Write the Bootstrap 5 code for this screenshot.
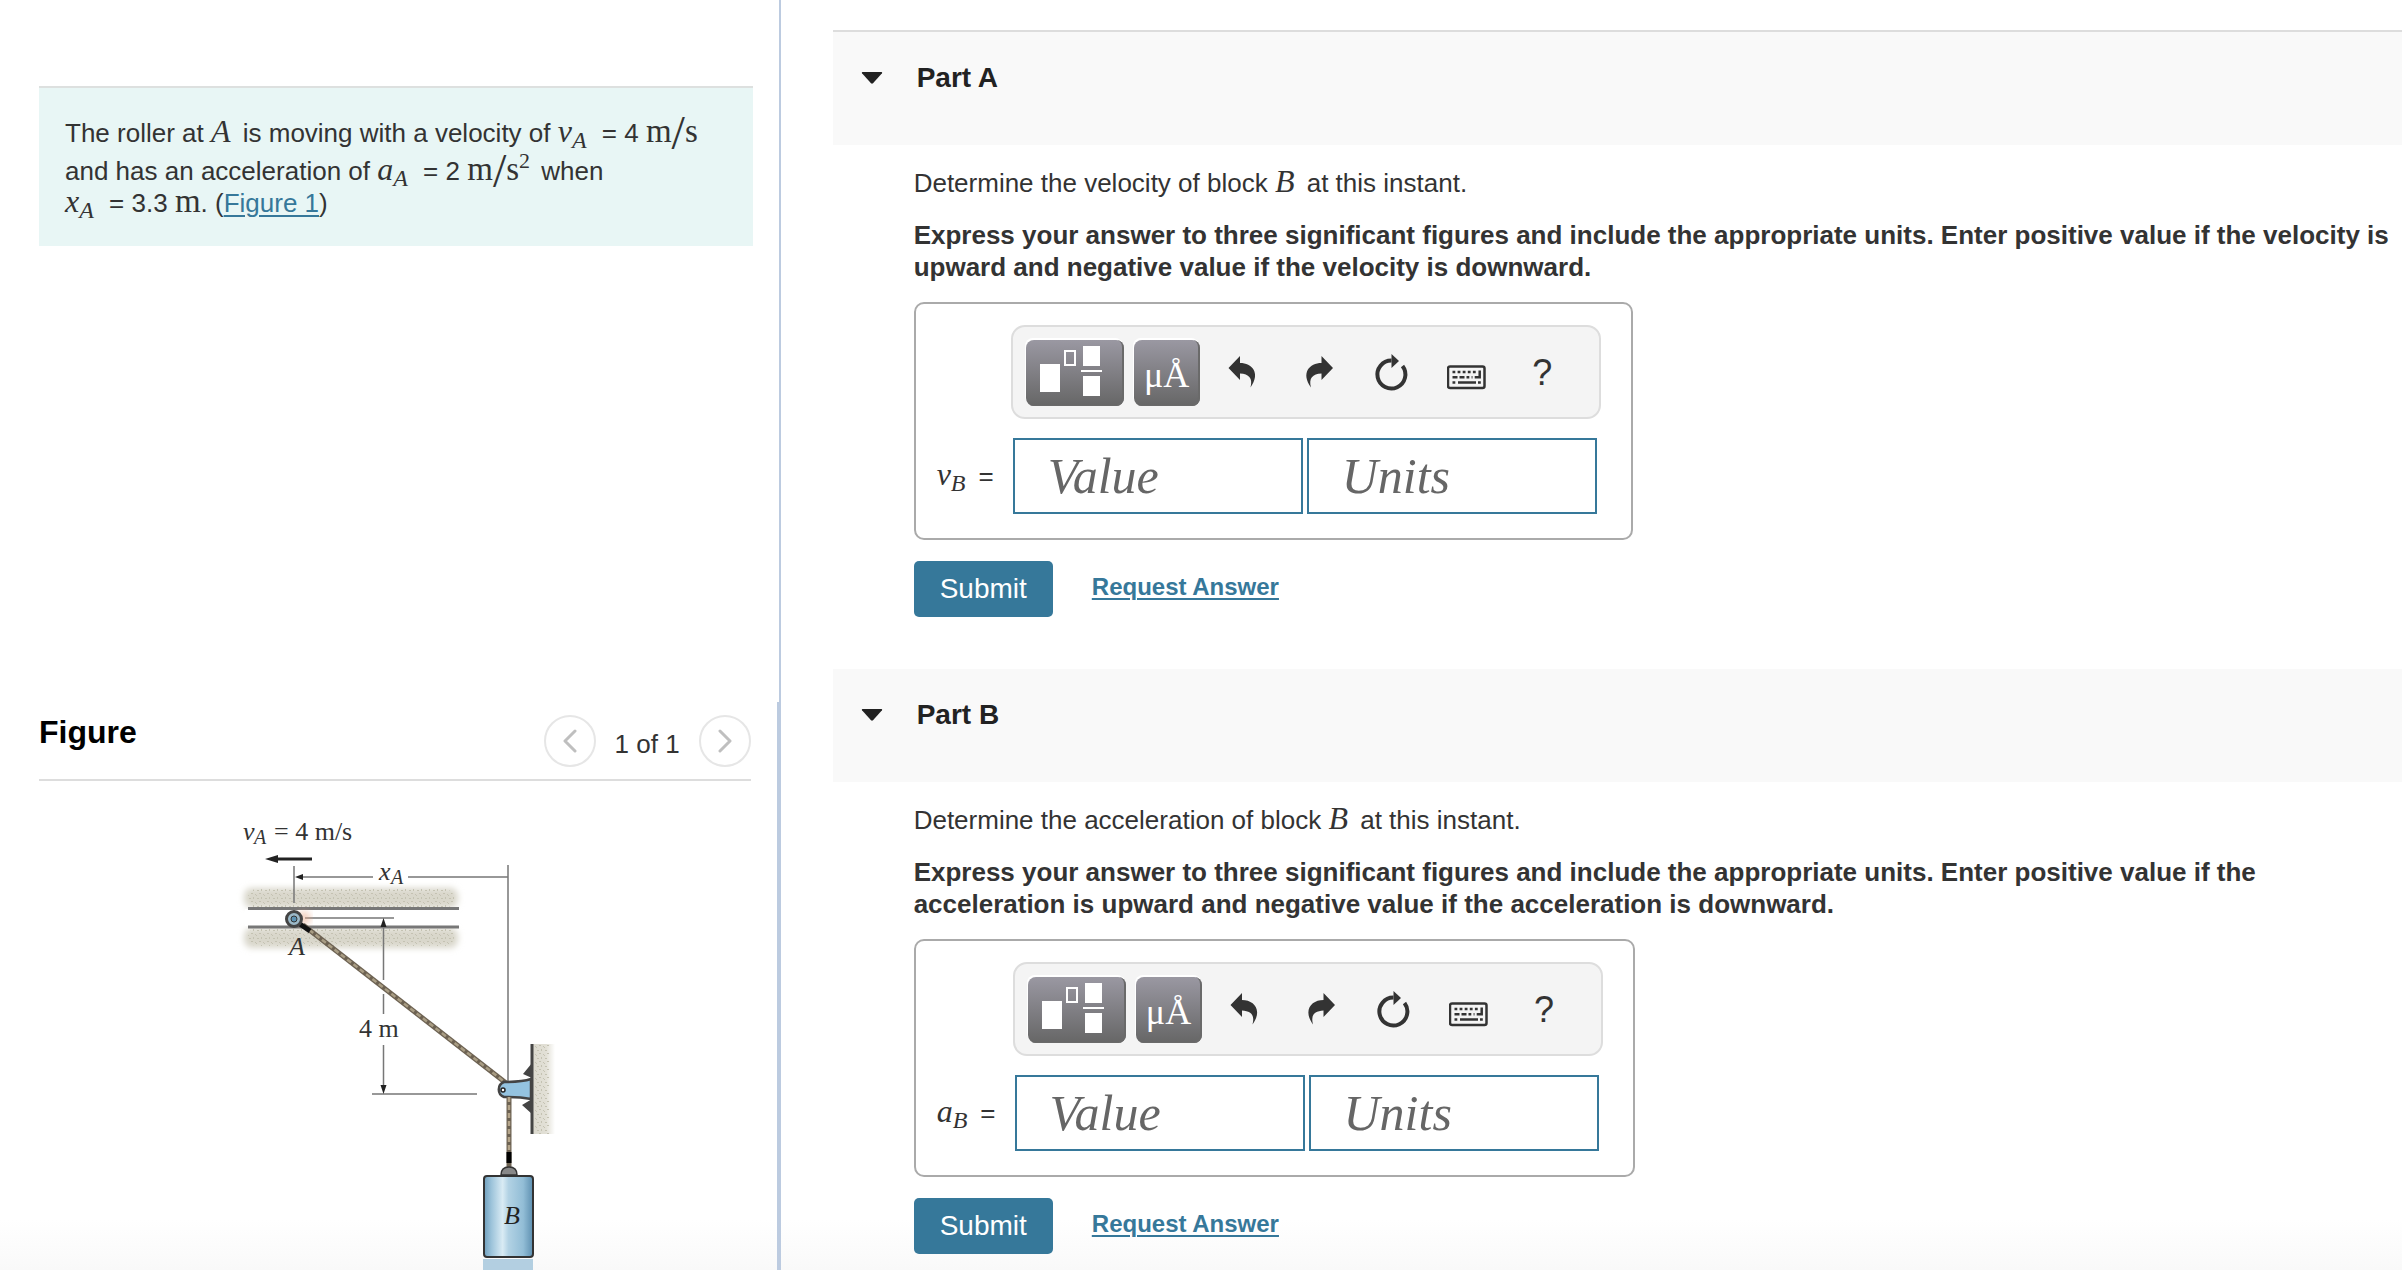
<!DOCTYPE html>
<html lang="en">
<head>
<meta charset="utf-8">
<meta name="viewport" content="width=device-width, initial-scale=1">
<title>Roller and block</title>
<link href="https://cdn.jsdelivr.net/npm/bootstrap@5.3.0/dist/css/bootstrap.min.css" rel="stylesheet">
<style>
  body { font: 26px/32px "Liberation Sans", Arial, sans-serif; color: #333; background: #fff; }
  .app-shell { height: 100vh; background: linear-gradient(to top, #f9f9f9, #fff 50px); }
  .side-col { flex: 0 0 32.5%; }
  .problem-pane { flex: 0 0 55.3%; border-right: 2px solid #bccbe0; padding: 86px 26px 0 39px; }
  .problem-text { background: #e8f6f5; border-top: 2px solid #dde0df; padding: 29px 26px 27px; }
  .figure-pane { border-right: 4px solid #bccbe0; padding: 13px 26px 0 39px; }
  .figure-head { border-bottom: 2px solid #ddd; height: 66px; }
  .figure-title { font-size: 32px; line-height: 34px; font-weight: 700; color: #000; }
  .pager-btn { width: 52px; height: 52px; border: 2px solid #e6e6e6; background: #fff; }
  .pager-count { padding: 6px 19px 0; }
  .teal-link { color: #36789a; text-decoration-thickness: 2px; text-underline-offset: 3px; }

  .mi, .mu, .msub, .msup, .mslash { font-family: "Liberation Serif", serif; }
  .mi { font-style: italic; font-size: 32px; line-height: 24px; }
  .mi-alone { margin-right: 5px; }
  .mu { font-size: 33px; line-height: 24px; }
  .msub { font-style: italic; font-size: 24px; line-height: 16px; vertical-align: -6px; margin-right: 8px; }
  .msup { font-size: 22px; line-height: 24px; vertical-align: 12px; margin-right: 4px; }
  .mslash { font-size: 48px; line-height: 16px; vertical-align: -7px; }

  .main-col { padding: 30px 0 0 52px; }
  .part-head { border-top: 2px solid transparent; background: #f9f9f9; background-clip: padding-box; padding: 30px 28px 51px; }
  .part-first .part-head { border-top-color: #ddd; }
  .part-toggle { font-size: 28px; line-height: 32px; font-weight: 700; color: #222; gap: 34px; }
  .part-body { padding: 22px 8px 50px 81px; }
  .ask { margin-bottom: 20px; }
  .directions { margin-bottom: 19px; }
  .answer-box { width: fit-content; border: 2px solid #aaa; border-radius: 10px; padding: 21px 30px 24px 21px; margin-bottom: 21px; background: #fff; grid-template-columns: auto auto; row-gap: 19px; }
  .tool-strip { grid-column: 2; border: 2px solid #ddd; border-radius: 14px; background: #f4f4f4; width: 590px; height: 94px; padding: 13px; gap: 10px; }
  .dark-tool { height: 66px; width: 66px; border-radius: 8px; background: linear-gradient(#9a98a2, #666); box-shadow: -1px -2px 0 #fff, inset -2px -1px 0 #6a6a6a; color: #fff; font: 36px/70px "Liberation Serif", serif; }
  .dark-tool.wide-tool { width: 98px; }
  .plain-tool { width: 65px; height: 66px; color: #333; background: none; font-size: 36px; line-height: 62px; }
  .answer-label { font-size: 26px; padding-right: 17px; }
  .answer-label .msub { margin-right: 13px; }
  .answer-fields { padding-left: 2px; gap: 4px; }
  .answer-input { width: 290px; height: 76px; border: 2px solid #36789a; border-radius: 0; padding: 0 33px; font: italic 50px "Liberation Serif", serif; color: #333; }
  .answer-input::placeholder { color: #666; opacity: 1; }
  .submit-btn { background: #36789a; color: #fff; font-size: 28px; line-height: 32px; border-radius: 5px; padding: 12px 26px; height: 56px; }
  .request-link { font-size: 24px; font-weight: 700; padding-top: 10px; margin-left: 39px; }
</style>
</head>
<body>
<svg class="d-none" aria-hidden="true">
  <symbol id="i-templates" viewBox="0 0 98 66">
    <g fill="#fff"><path d="M14 24h20v28H14zM57 6h17v20H57zM55 30h21v2H55zM57 36h17v20H57z"/></g>
    <rect x="39" y="11" width="10" height="14" fill="none" stroke="#fff" stroke-width="2"/>
  </symbol>
  <symbol id="i-undo" viewBox="0 0 40 66"><path d="M6.500 28 18 16v7C30 23 39 33 28.500 47.500 31 38 27 34 18 33.500V40z" fill="currentColor"/></symbol>
  <symbol id="i-redo" viewBox="0 0 40 66"><path d="M36 28 24.500 16v7C12.500 23 3.500 33 14 47.500 11.500 38 15.500 34 24.500 33.500V40z" fill="currentColor"/></symbol>
  <symbol id="i-reset" viewBox="0 0 40 66">
    <path d="M30.500 26A14 14 0 1 1 19.500 20.500" fill="none" stroke="currentColor" stroke-width="4"/>
    <path d="M19.500 14 27 21l-7.500 7z" fill="currentColor"/>
  </symbol>
  <symbol id="i-keys" viewBox="0 0 40 66">
    <rect x="1" y="26.500" width="36.500" height="21.500" rx="2" fill="none" stroke="currentColor" stroke-width="2.500"/>
    <path d="M5.500 32h24M5.500 42.500h3M31 42.500h3" stroke="currentColor" stroke-width="2.500" stroke-dasharray="2.800 2.300"/>
    <path d="M5.500 37.300h5M12.500 37.300h13" stroke="currentColor" stroke-width="2.500" stroke-dasharray="5 2 2.800 2.300 2.800 2.300 2.800"/>
    <path d="M32.700 30.500v6.800h-5M11 42.500h18" fill="none" stroke="currentColor" stroke-width="2.500"/>
  </symbol>
  <symbol id="i-caret" viewBox="0 0 22 12"><path d="M1.500 0h19q1 .3.500 1.300L12 11.300q-1 .9-2 0L1 1.300Q.5.300 1.500 0z" fill="currentColor"/></symbol>
</svg>

<div class="app-shell d-flex overflow-hidden">
  <aside class="side-col d-flex flex-column">
    <section class="problem-pane">
      <div class="problem-text">
        The roller at <span class="mi mi-alone">A</span> is moving with a velocity of <span class="mi">v</span><span class="msub">A</span> = 4 <span class="mu">m</span><span class="mslash">/</span><span class="mu">s</span><br>
        and has an acceleration of <span class="mi">a</span><span class="msub">A</span> = 2 <span class="mu">m</span><span class="mslash">/</span><span class="mu">s</span><span class="msup">2</span> when<br>
        <span class="mi">x</span><span class="msub">A</span> = 3.3 <span class="mu">m</span>. (<a class="teal-link" href="#figure">Figure 1</a>)
      </div>
    </section>
    <section class="figure-pane flex-grow-1 overflow-hidden" id="figure">
      <div class="figure-head d-flex justify-content-between align-items-start">
        <h2 class="figure-title m-0">Figure</h2>
        <div class="d-flex align-items-center">
          <button type="button" class="pager-btn rounded-circle p-0 d-flex align-items-center justify-content-center" aria-label="Previous figure">
            <svg width="16" height="24" viewBox="0 0 16 24" fill="none" stroke="#bfbfbf" stroke-width="3" stroke-linecap="round" stroke-linejoin="round"><path d="M13 2 3 12l10 10"/></svg>
          </button>
          <span class="pager-count">1 of 1</span>
          <button type="button" class="pager-btn rounded-circle p-0 d-flex align-items-center justify-content-center" aria-label="Next figure">
            <svg width="16" height="24" viewBox="0 0 16 24" fill="none" stroke="#bfbfbf" stroke-width="3" stroke-linecap="round" stroke-linejoin="round"><path d="m3 2 10 10L3 22"/></svg>
          </button>
        </div>
      </div>
      <svg class="d-block mx-auto mt-3" width="330" height="474" viewBox="230 797 330 474" font-family="Liberation Serif, serif" font-size="26" fill="#333" role="img" aria-label="Roller A in a slot, tied by a rope over a pulley to block B">
        <defs>
          <filter id="soft" x="-10%" y="-40%" width="120%" height="180%"><feGaussianBlur stdDeviation="3"/></filter>
          <linearGradient id="steel"><stop offset="0" stop-color="#6f9fbd"/><stop offset=".15" stop-color="#9cc3da"/><stop offset=".38" stop-color="#d9ebf4"/><stop offset=".5" stop-color="#b2d2e4"/><stop offset=".8" stop-color="#92bdd6"/><stop offset="1" stop-color="#5d8fb0"/></linearGradient>
          <linearGradient id="wall"><stop offset="0" stop-color="#dcdacf"/><stop offset=".6" stop-color="#e2e0d6"/><stop offset="1" stop-color="#fff"/></linearGradient>
          <pattern id="grit" width="8" height="8" patternUnits="userSpaceOnUse"><path d="M1 2h2v1H1zM5 1h1v2H5zM3 5h2v1H3zM7 6h1v1H7zM0 7h1v1H0z" fill="#c4c2b2"/></pattern>
        </defs>
        <g filter="url(#soft)"><rect x="244" y="888" width="214" height="20" rx="8" fill="#d9d7cb"/><rect x="244" y="928" width="214" height="20" rx="8" fill="#d9d7cb"/></g>
        <rect x="248" y="889" width="206" height="19" rx="9" fill="url(#grit)"/><rect x="248" y="928" width="206" height="18" rx="9" fill="url(#grit)"/>
        <rect x="245" y="909" width="215" height="17" fill="#fff"/>
        <path d="M248 908.500h211M248 927h211" stroke="#777" stroke-width="3"/>
        <path d="M278 859h34" stroke="#222" stroke-width="3"/><path d="m265 859 13-4v8z" fill="#222"/>
        <path d="M294 866v37M302 877h71M408 877h100M508 865v216M305 918h89M383.500 926v54M383.500 994v20M383.500 1045v42M372 1094h105" stroke="#777" stroke-width="1.500"/>
        <path d="m295 877 8-3v6zM383.500 918l-3 9h6zM383.500 1094l-3-9h6z" fill="#222"/>
        <circle cx="304" cy="918" r="7" fill="#e9a888" opacity=".5" filter="url(#soft)"/>
        <path d="m303 925 203 158" stroke="#6d6252" stroke-width="5"/><path d="m303 925 203 158" stroke="#a99d84" stroke-width="2.500" stroke-dasharray="5 3"/>
        <path d="m297 922 13 9" stroke="#111" stroke-width="5"/>
        <circle cx="294" cy="919" r="7.500" fill="#9cb9c8" stroke="#444" stroke-width="3"/><circle cx="294" cy="919" r="3" fill="#5c93b4" stroke="#333"/>
        <path d="M533 1044h22v90h-22z" fill="url(#wall)"/><path d="M534 1044h15v90h-15z" fill="url(#grit)"/>
        <path d="m532 1063-9 11 9 4zM532 1099l-10 6 10 9z" fill="#444"/>
        <path d="M532 1044v90" stroke="#444" stroke-width="3"/>
        <path d="M531 1079q-9 3-27 3a8 8 0 0 0 0 15q16 0 27 2z" fill="#94c3e0" stroke="#444" stroke-width="2.500"/>
        <circle cx="503" cy="1090" r="2" fill="#fff" stroke="#222" stroke-width="1.500"/>
        <path d="M509 1097v70" stroke="#6d6252" stroke-width="5"/><path d="M509 1097v55" stroke="#b5a58a" stroke-width="2.500" stroke-dasharray="5 3"/>
        <path d="M509 1152v11" stroke="#000" stroke-width="5"/>
        <path d="M501 1175q0-8 8-8t8 8z" fill="#888" stroke="#333" stroke-width="1.500"/>
        <rect x="484" y="1176" width="49" height="81" rx="3" fill="url(#steel)" stroke="#333" stroke-width="2"/>
        <rect x="483" y="1259" width="50" height="12" fill="#b3cfe1"/>
        <text x="243" y="840" font-style="italic">v</text><text x="254" y="844" font-style="italic" font-size="20">A</text>
        <text x="274" y="840">= 4 m/s</text>
        <text x="379" y="880" font-style="italic">x</text><text x="391" y="884" font-style="italic" font-size="20">A</text>
        <text x="289" y="955" font-style="italic">A</text>
        <text x="359" y="1037">4 m</text>
        <text x="504" y="1224" font-style="italic" fill="#222">B</text>
      </svg>
    </section>
  </aside>

  <main class="main-col flex-grow-1">
    <section class="part-first">
      <h2 class="part-head m-0"><button type="button" class="part-toggle btn p-0 border-0 d-flex align-items-center"><svg width="22" height="12"><use href="#i-caret"/></svg>Part A</button></h2>
      <form class="part-body">
        <p class="ask">Determine the velocity of block <span class="mi mi-alone">B</span> at this instant.</p>
        <p class="directions fw-bold">Express your answer to three significant figures and include the appropriate units. Enter positive value if the velocity is upward and negative value if the velocity is downward.</p>
        <div class="answer-box d-grid align-items-center">
          <div class="tool-strip d-flex">
            <button type="button" class="dark-tool wide-tool border-0 p-0 d-flex" aria-label="Templates"><svg width="98" height="66"><use href="#i-templates"/></svg></button>
            <button type="button" class="dark-tool border-0 p-0">μÅ</button>
            <button type="button" class="plain-tool border-0 p-0" aria-label="Undo"><svg width="40" height="66" class="d-block mx-auto"><use href="#i-undo"/></svg></button>
            <button type="button" class="plain-tool border-0 p-0" aria-label="Redo"><svg width="40" height="66" class="d-block mx-auto"><use href="#i-redo"/></svg></button>
            <button type="button" class="plain-tool border-0 p-0" aria-label="Reset"><svg width="40" height="66" class="d-block mx-auto"><use href="#i-reset"/></svg></button>
            <button type="button" class="plain-tool border-0 p-0" aria-label="Keyboard shortcuts"><svg width="40" height="66" class="d-block mx-auto"><use href="#i-keys"/></svg></button>
            <button type="button" class="plain-tool border-0 p-0">?</button>
          </div>
          <label class="answer-label" for="va"><span class="mi">v</span><span class="msub">B</span>=</label>
          <div class="answer-fields d-flex">
            <input class="answer-input" id="va" type="text" placeholder="Value">
            <input class="answer-input" type="text" placeholder="Units" aria-label="Units">
          </div>
        </div>
        <div class="d-flex align-items-start">
          <button type="submit" class="submit-btn btn border-0">Submit</button>
          <a class="request-link teal-link" href="#">Request Answer</a>
        </div>
      </form>
    </section>
    <section>
      <h2 class="part-head m-0"><button type="button" class="part-toggle btn p-0 border-0 d-flex align-items-center"><svg width="22" height="12"><use href="#i-caret"/></svg>Part B</button></h2>
      <form class="part-body">
        <p class="ask">Determine the acceleration of block <span class="mi mi-alone">B</span> at this instant.</p>
        <p class="directions fw-bold">Express your answer to three significant figures and include the appropriate units. Enter positive value if the acceleration is upward and negative value if the acceleration is downward.</p>
        <div class="answer-box d-grid align-items-center">
          <div class="tool-strip d-flex">
            <button type="button" class="dark-tool wide-tool border-0 p-0 d-flex" aria-label="Templates"><svg width="98" height="66"><use href="#i-templates"/></svg></button>
            <button type="button" class="dark-tool border-0 p-0">μÅ</button>
            <button type="button" class="plain-tool border-0 p-0" aria-label="Undo"><svg width="40" height="66" class="d-block mx-auto"><use href="#i-undo"/></svg></button>
            <button type="button" class="plain-tool border-0 p-0" aria-label="Redo"><svg width="40" height="66" class="d-block mx-auto"><use href="#i-redo"/></svg></button>
            <button type="button" class="plain-tool border-0 p-0" aria-label="Reset"><svg width="40" height="66" class="d-block mx-auto"><use href="#i-reset"/></svg></button>
            <button type="button" class="plain-tool border-0 p-0" aria-label="Keyboard shortcuts"><svg width="40" height="66" class="d-block mx-auto"><use href="#i-keys"/></svg></button>
            <button type="button" class="plain-tool border-0 p-0">?</button>
          </div>
          <label class="answer-label" for="ab"><span class="mi">a</span><span class="msub">B</span>=</label>
          <div class="answer-fields d-flex">
            <input class="answer-input" id="ab" type="text" placeholder="Value">
            <input class="answer-input" type="text" placeholder="Units" aria-label="Units">
          </div>
        </div>
        <div class="d-flex align-items-start">
          <button type="submit" class="submit-btn btn border-0">Submit</button>
          <a class="request-link teal-link" href="#">Request Answer</a>
        </div>
      </form>
    </section>
  </main>
</div>
<script src="https://cdn.jsdelivr.net/npm/bootstrap@5.3.0/dist/js/bootstrap.bundle.min.js"></script>
</body>
</html>
